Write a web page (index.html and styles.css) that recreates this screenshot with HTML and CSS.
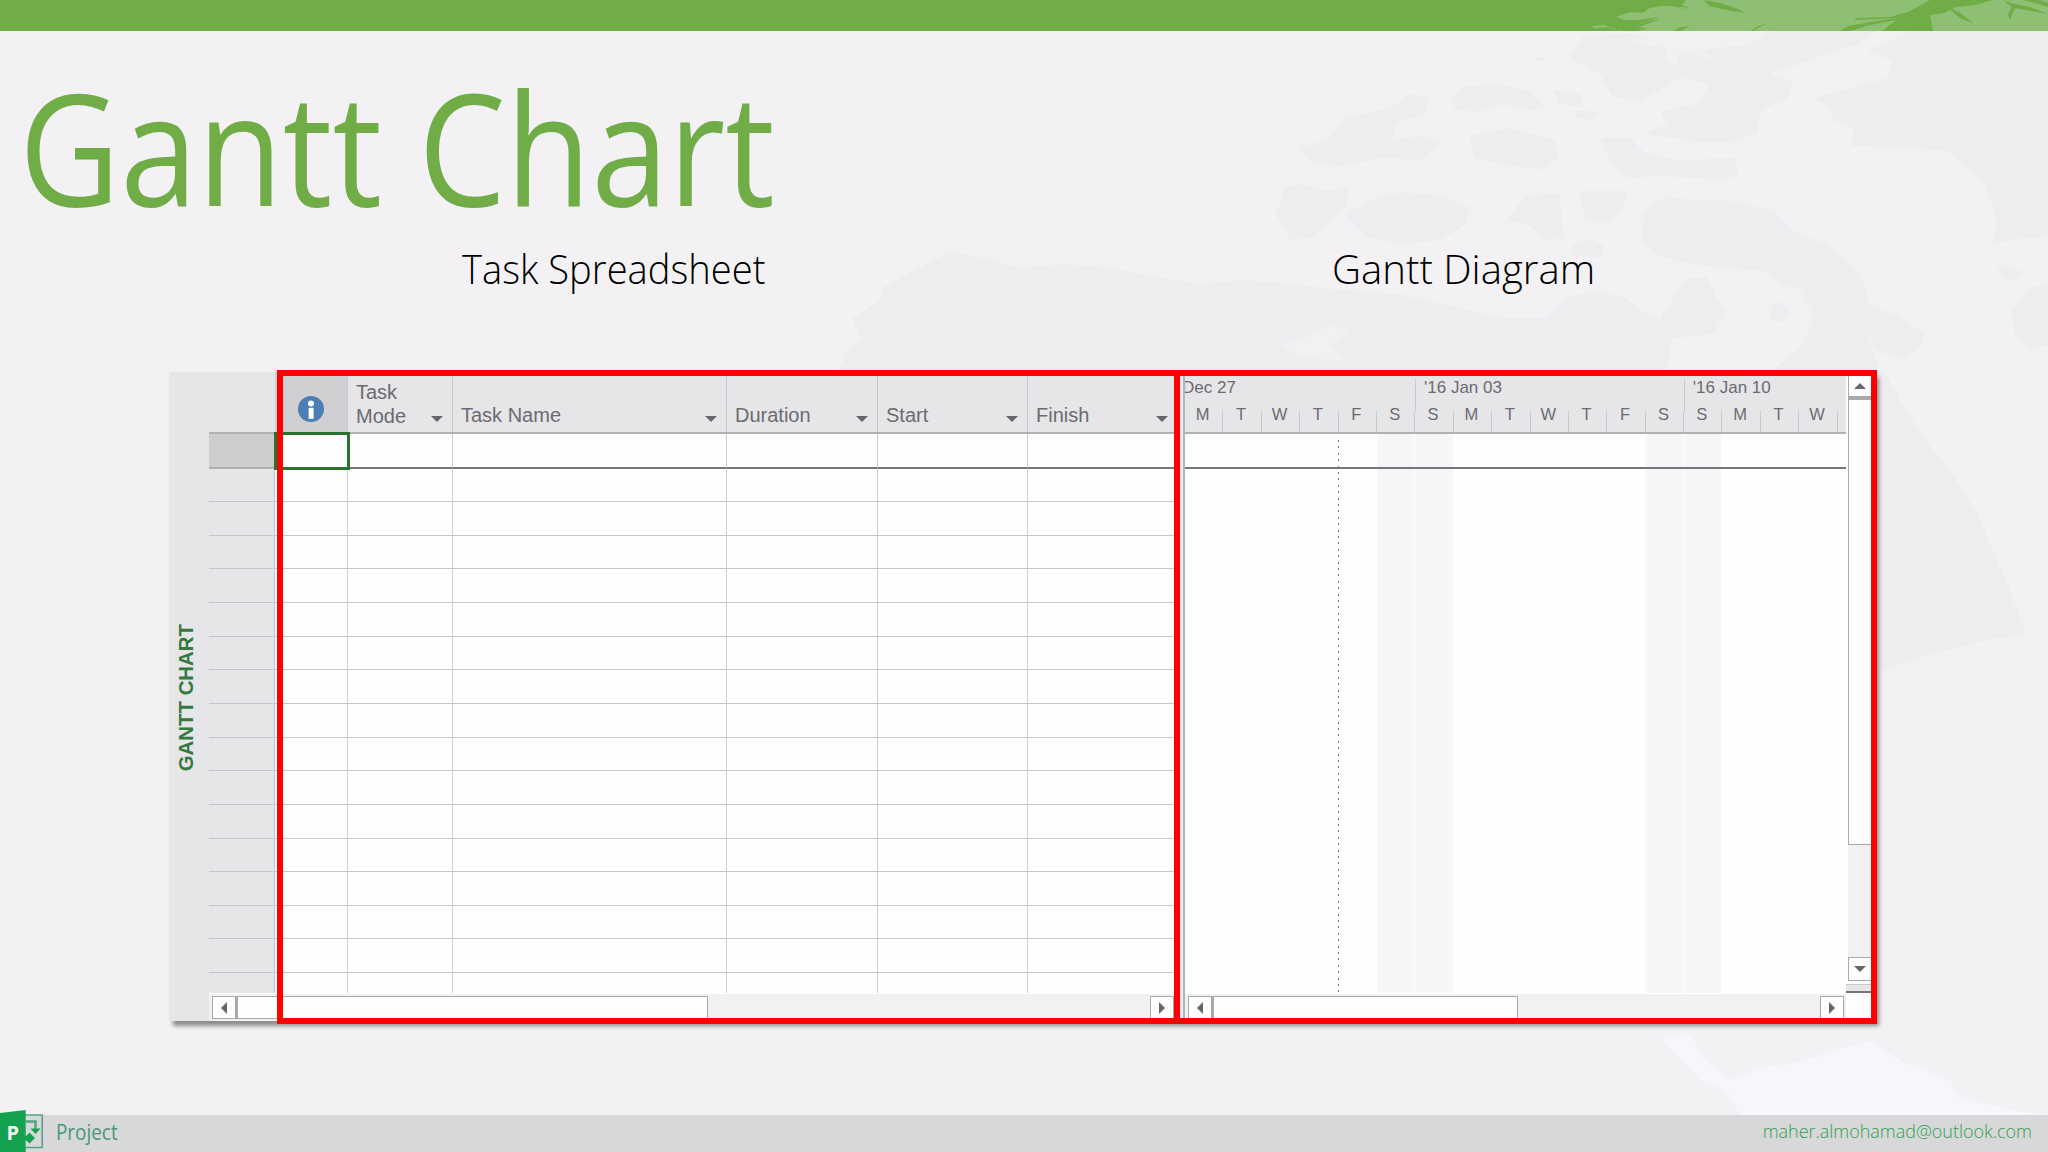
FILE: index.html
```html
<!DOCTYPE html>
<html lang="en">

<head>
    <meta charset="UTF-8">
    <meta name="viewport" content="width=device-width, initial-scale=1.0">
    <title>Gantt Chart</title>
    <link rel="stylesheet" href="styles.css">

    <script>
        document.addEventListener("DOMContentLoaded", () => {

            const columns = ["info", "mode", "name", "duration", "start", "finish"];
            let rows = document.getElementById("rows");

            for (let i = 0; i < 17; i++) {
                let row = document.createElement("div");
                row.className = i === 0 ? "row selected" : "row";

                let head = document.createElement("div");
                head.className = "row-head";
                row.appendChild(head);

                for (let column of columns) {
                    let cell = document.createElement("div");
                    cell.className = "cell " + column;
                    row.appendChild(cell);
                }

                rows.appendChild(row);
            }

            let days = document.getElementById("days");
            let columnsArea = document.getElementById("dayColumns");

            for (let letter of "MTWTFSSMTWTFSSMTW") {
                let day = document.createElement("div");
                day.className = "day";
                day.innerText = letter;
                days.appendChild(day);

                let column = document.createElement("div");
                column.className = letter === "S" ? "day-column weekend" : "day-column";
                columnsArea.appendChild(column);
            }

        }, false);
    </script>
</head>

<body>

    <svg class="map" viewBox="0 0 2048 1152">
        <g class="land">
            <path d="M838 370L850 347L862 340L852 318L880 300L884 287L915 270L950 252L985 258L1020 268L1064 264L1110 268L1150 276L1200 284L1245 280L1290 284L1340 290L1400 294L1440 304L1480 312L1500 318L1546 318L1566 298L1594 291L1626 298L1646 314L1660 320L1686 278L1706 277L1726 314L1713 334L1673 338L1666 372Z" />
            <path d="M1276 215L1284 188L1300 184L1325 190L1350 188L1345 207L1330 222L1310 238L1290 240Z" />
            <path d="M1345 215L1370 200L1400 192L1440 196L1470 208L1465 225L1440 240L1400 244L1366 236Z" />
            <path d="M1300 148L1330 138L1345 118L1390 108L1410 94L1430 98L1424 114L1398 122L1390 140L1420 136L1440 144L1420 160L1380 158L1340 166L1310 162Z" />
            <path d="M1450 98L1464 86L1500 84L1530 92L1544 106L1530 110L1504 104L1480 112L1456 110Z" />
            <path d="M1553 90L1580 94L1584 108L1560 104ZM1576 110L1598 112L1592 120L1576 118ZM1534 56L1546 58L1538 62Z" />
            <path d="M1470 136L1510 128L1554 140L1560 158L1540 170L1500 164L1474 158Z" />
            <path d="M1583 36L1570 58L1600 74L1613 98L1640 100L1663 88L1680 78L1710 84L1697 104L1660 111L1667 124L1643 134L1700 142L1733 141L1757 134L1760 111L1787 98L1793 81L1770 74L1807 61L1857 44L1877 31H1770L1750 44L1700 50L1660 42L1630 34Z" />
            <path d="M1600 138L1630 138L1646 154L1680 160L1735 158L1738 174L1726 180L1660 176L1630 178L1612 166Z" />
            <path d="M1580 191L1627 191L1622 212L1604 224L1584 216ZM1524 196L1560 194L1562 230L1566 238L1546 240L1530 226L1508 220Z" />
            <path d="M1573 246L1592 238L1604 246L1600 258L1572 254Z" />
            <path d="M1643 244L1640 221L1650 204L1667 196L1690 200L1733 201L1773 211L1793 231L1830 246L1860 274L1870 304L1900 318L1925 334L1918 350L1900 360L1876 350L1866 330L1880 372H1770L1800 348L1814 318L1800 290L1780 282L1760 270L1720 268L1680 262L1660 256Z" />
            <path d="M1768 306L1780 302L1790 312L1784 322L1770 320Z" />
            <path d="M1912 31L1867 51L1893 61L1887 78L1813 98L1830 108L1834 120L1853 128L1852 146L1946 150L1983 181L1997 218L1993 244L2010 240L2048 236V31Z" />
            <path d="M2000 264L2024 272L2014 282L1998 274ZM2048 284L2030 288L2012 310L2014 332L2030 350L2048 345Z" />
            <path d="M1876 372L1880 672L1905 662L1960 647L1985 640L2026 634L2010 590L1990 545L1978 515L1950 470L1925 440L1900 400L1885 372Z" />
        </g>
        <g class="water">
            <path d="M1626 36L1660 42L1750 35L1738 44L1700 50L1720 60L1680 52L1676 66L1664 60L1666 48L1640 44Z" />
            <path d="M1280 345L1310 335L1330 325L1350 332L1330 345L1345 360L1300 358Z" />
            <path d="M1500 318L1470 300L1450 304L1440 292L1480 288L1520 300L1540 314Z" />
        </g>
        <path class="shore" d="M1660 1038L1690 1034L1705 1060L1730 1080L1760 1068L1800 1062L1840 1048L1870 1042L1900 1060L1950 1080L1960 1098L2020 1112L2048 1115L1740 1115L1725 1090L1700 1080Z" />
    </svg>

    <header class="top-bar">
        <svg viewBox="0 0 548 31" preserveAspectRatio="none">
            <path class="light" d="M92 26L104 25L113 29L125 31H548V0H186L182 5L190 8L172 6L160 6L150 8L142 13L130 12L116 17L125 20L138 20L160 17L145 22L133 27L140 31L120 31L110 27L94 28Z" />
            <path class="dark" d="M133 27L148 21L161 19L150 23L139 27L148 29L132 31ZM165 4L180 8L191 10L178 7L170 0ZM204 0L220 3L236 8L245 13L226 10L209 6ZM173 31L180 27L190 26L180 31ZM251 31L258 26L268 23L258 28L254 31ZM340 31L348 26L370 22L398 18L354 20L356 18L390 17L408 12L430 0H493L475 5L456 7L444 13L430 15L433 31H382L396 20L370 25L350 31ZM445 5L462 14L474 24L460 18ZM503 0L514 4L530 7L548 14L526 10L515 8L510 20L508 14L512 7ZM524 0L548 7V3L540 0Z" />
        </svg>
    </header>

    <main>
        <h1>Gantt Chart</h1>

        <div class="captions">
            <h2 class="caption-table">Task Spreadsheet</h2>
            <h2 class="caption-diagram">Gantt Diagram</h2>
        </div>

        <section class="project">

            <div class="view-name"><span>GANTT CHART</span></div>

            <div class="sheet">
                <div class="sheet-head">
                    <div class="row-head"></div>
                    <div class="head info">
                        <svg viewBox="0 0 26 26">
                            <circle cx="13" cy="13" r="13" />
                            <rect x="10.6" y="11.8" width="5" height="11" />
                            <circle class="dot" cx="13" cy="7.6" r="3" />
                        </svg>
                    </div>
                    <div class="head mode"><span>Task<br>Mode</span><i class="arrow down"></i></div>
                    <div class="head name"><span>Task Name</span><i class="arrow down"></i></div>
                    <div class="head duration"><span>Duration</span><i class="arrow down"></i></div>
                    <div class="head start"><span>Start</span><i class="arrow down"></i></div>
                    <div class="head finish"><span>Finish</span><i class="arrow down"></i></div>
                </div>
                <div class="rows" id="rows"></div>
                <div class="hscroll">
                    <div class="button"><i class="arrow left"></i></div>
                    <div class="thumb"></div>
                    <div class="button end"><i class="arrow right"></i></div>
                </div>
                <div class="active-cell"></div>
            </div>

            <div class="splitter"></div>

            <div class="timeline">
                <div class="time-head">
                    <div class="weeks">
                        <div class="week first"><span>Dec 27</span></div>
                        <div class="week">'16 Jan 03</div>
                        <div class="week">'16 Jan 10</div>
                    </div>
                    <div class="days" id="days"></div>
                </div>
                <div class="day-columns" id="dayColumns">
                    <div class="row-line"></div>
                    <div class="today"></div>
                </div>
                <div class="hscroll">
                    <div class="button"><i class="arrow left"></i></div>
                    <div class="thumb"></div>
                    <div class="button end"><i class="arrow right"></i></div>
                </div>
            </div>

            <div class="vscroll">
                <div class="button"><i class="arrow up"></i></div>
                <div class="thumb"></div>
                <div class="track"></div>
                <div class="button bottom"><i class="arrow down"></i></div>
                <div class="grip"></div>
            </div>

            <div class="frame frame-table"></div>
            <div class="frame frame-diagram"></div>
        </section>
    </main>

    <footer>
        <svg class="logo" viewBox="0 0 44 42">
            <path class="page" d="M25 5H42.2V37.5H25" />
            <path class="page link" d="M26 11.5H35.5V19" />
            <path class="fill" d="M30.5 18.5H40.5L35.5 24ZM29.5 22.5L35 28L29.5 33.5L24 28Z" />
            <path class="fill" d="M0 3L25.7 0V42H0Z" />
            <text x="6.5" y="30">P</text>
        </svg>
        <span class="product">Project</span>
        <span class="email">maher.almohamad@outlook.com</span>
    </footer>

</body>

</html>
```
FILE: styles.css
```css
* {
    box-sizing: border-box;
}

body {
    margin: 0;
    width: 2048px;
    height: 1152px;
    overflow: hidden;
    display: flex;
    flex-direction: column;
    background-color: #f3f1f4;
    font-family: "Open Sans", "Noto Sans", sans-serif;
}

/* faint world map behind everything */
.map {
    position: absolute;
    left: 0;
    top: 0;
    width: 2048px;
    height: 1152px;
    z-index: -1;
}

.land {
    fill: #eeecef;
}

.water {
    fill: #f1f0f3;
}

.shore {
    fill: #f7f6fa;
}

.top-bar {
    height: 31px;
    background-color: #70ad47;
    display: flex;
    justify-content: flex-end;
}

.top-bar svg {
    width: 548px;
    height: 31px;
}

.top-bar .light {
    fill: #8fbf74;
}

.top-bar .dark {
    fill: #70ad47;
}

main {
    flex: 1;
}

h1 {
    margin: 25px 0 0 19px;
    width: max-content;
    font-size: 156px;
    font-weight: 400;
    line-height: 180px;
    color: #70ad47;
    transform-origin: left;
    transform: scaleX(0.892);
}

.captions {
    display: flex;
    margin-top: 2px;
    height: 60px;
}

h2 {
    margin: 0;
    font-size: 41px;
    font-weight: 300;
    line-height: 60px;
    color: #000;
    white-space: nowrap;
    transform-origin: left;
}

.caption-table {
    margin-left: 462px;
    width: 870px;
    transform: scaleX(0.93);
}

.caption-diagram {
    transform: scaleX(0.979);
}

/* project window */

.project {
    position: relative;
    display: flex;
    width: 1706px;
    height: 649px;
    margin: 74px 0 0 169px;
    background-color: #e6e5e8;
    box-shadow: 4px 5px 4px rgba(0, 0, 0, 0.42);
    font-family: "Liberation Sans", Arial, sans-serif;
    color: #6b6b70;
}

.view-name {
    width: 40px;
    display: flex;
    align-items: center;
    justify-content: center;
}

.view-name span {
    writing-mode: vertical-rl;
    transform: rotate(180deg);
    font-size: 20.4px;
    font-weight: bold;
    color: #34793f;
    margin: 3px 5px 0 0;
    white-space: nowrap;
}

.sheet {
    position: relative;
    width: 965px;
    display: flex;
    flex-direction: column;
}

.sheet-head {
    display: flex;
    height: 62px;
    border-bottom: 2px solid #b1b0b3;
}

.sheet-head .row-head {
    border-color: transparent;
}

.row-head {
    width: 66px;
    border-right: 1px solid #c4c3c7;
}

.info {
    width: 73px;
}

.mode {
    width: 105px;
}

.name {
    width: 274px;
}

.duration {
    width: 151px;
}

.start {
    width: 150px;
}

.finish {
    width: 146px;
}

.head {
    display: flex;
    align-items: flex-end;
    justify-content: space-between;
    border-right: 1px solid #c9c8cc;
    padding: 0 9px 5px 8px;
    font-size: 20px;
    line-height: 24px;
}

.head .arrow {
    margin-bottom: 5px;
}

.head.mode span {
    margin-bottom: -1px;
}

.head.finish,
.cell.finish {
    border-right: none;
}

.head.finish {
    padding-right: 6px;
}

.head.info {
    background-color: #d0cfd1;
    justify-content: center;
    padding: 0 0 10px;
}

.head.info svg {
    width: 26px;
    height: 26px;
    fill: #4a7eb5;
}

.head.info rect,
.head.info .dot {
    fill: #fff;
}

.rows {
    height: 559px;
    overflow: hidden;
}

.row {
    display: flex;
    height: 33.65px;
}

.row > div {
    border-bottom: 1px solid #c8c6ca;
}

.row.selected {
    height: 34.5px;
}

.row.selected > div {
    border-bottom: 2px solid #77757a;
}

.row.selected .row-head {
    background-color: #cdccce;
    border-bottom-color: #b1b0b3;
}

.cell {
    background-color: #fefefe;
    border-right: 1px solid #cfcdd1;
}

.active-cell {
    position: absolute;
    left: 65px;
    top: 60px;
    width: 76px;
    height: 38px;
    border: 3px solid #2a7230;
}

.arrow {
    width: 0;
    height: 0;
    border: 6px solid transparent;
}

.arrow.down {
    border-top-color: #67666a;
    border-bottom: none;
}

.arrow.up {
    border-bottom-color: #67666a;
    border-top: none;
}

.arrow.left {
    border-right-color: #67666a;
    border-left: none;
}

.arrow.right {
    border-left-color: #67666a;
    border-right: none;
}

.hscroll {
    height: 28px;
    display: flex;
    padding: 2px 2px 0 3px;
    background-color: #f2f1f2;
    border-top: 1px solid #fff;
}

.button {
    display: flex;
    align-items: center;
    justify-content: center;
    background-color: #fefefe;
    border: 1px solid #a9a8ab;
}

.hscroll .button,
.hscroll .thumb {
    height: 23px;
}

.hscroll .button {
    width: 24px;
}

.thumb {
    background-color: #fefefe;
    border: 1px solid #a9a8ab;
}

.hscroll .thumb {
    width: 472px;
    border-left-width: 2px;
}

.hscroll .end {
    margin-left: auto;
}

.sheet .hscroll {
    padding-right: 0;
}

.timeline .hscroll .thumb {
    width: 306px;
}

.splitter {
    width: 11px;
    background-color: #eceaed;
    border-right: 2px solid #b5b4b7;
}

/* timescale and day columns */

.timeline {
    width: 661px;
    display: flex;
    flex-direction: column;
}

.time-head {
    height: 62px;
    background-color: #e6e6e8;
    border-bottom: 2px solid #b1b0b3;
    overflow: hidden;
}

.weeks,
.days {
    display: flex;
}

.weeks {
    height: 39px;
    padding-top: 7px;
}

.week {
    width: 268.8px;
    flex: none;
    border-left: 1px solid #c9c8cc;
    padding-left: 8px;
    font-size: 17px;
    line-height: 17px;
}

.week.first {
    width: 230px;
    border-left: none;
    padding-left: 0;
    overflow: hidden;
}

.week.first span {
    margin-left: -3px;
}

.days {
    height: 21px;
    font-size: 16.5px;
    line-height: 7px;
}

.day {
    width: 38.4px;
    flex: none;
    border-right: 1px solid #c9c8cc;
    text-align: center;
    padding-right: 2px;
}

.day-columns {
    position: relative;
    display: flex;
    height: 559px;
    background-color: #fefefe;
}

.day-column {
    width: 38.4px;
}

.weekend {
    background-color: #f6f5f8;
    border-right: 1px solid #fefefe;
}

.row-line {
    position: absolute;
    left: 0;
    right: 0;
    top: 33px;
    height: 2px;
    background-color: #77757a;
}

.today {
    position: absolute;
    left: 153px;
    top: 6px;
    bottom: 0;
    width: 1px;
    background: repeating-linear-gradient(#77757a 0, #77757a 2px, transparent 2px, transparent 6.4px);
}

.vscroll {
    width: 29px;
    display: flex;
    flex-direction: column;
    padding-left: 2px;
    background-color: #fefefe;
}

.vscroll .button {
    height: 25px;
    width: 24px;
    padding-top: 3px;
}

.vscroll .thumb {
    height: 448px;
    border-top-width: 3px;
}

.vscroll .track {
    height: 112px;
    background-color: #f1f1f3;
}

.vscroll .bottom {
    height: 24px;
    padding-top: 0;
}

.vscroll .grip {
    height: 9px;
    margin: 3px 0 0 -2px;
    background-color: #e6e5e8;
    border-top: 1px solid #c9c8cc;
    border-bottom: 2px solid #77757a;
}

/* red highlight boxes */

.frame {
    position: absolute;
    top: -2px;
    height: 654px;
    border: 6px solid #f00;
}

.frame-table {
    left: 108px;
    width: 903px;
}

.frame-diagram {
    left: 1005px;
    width: 703px;
}

footer {
    height: 37px;
    display: flex;
    align-items: center;
    background-color: #d8d7d9;
}

.logo {
    width: 44px;
    height: 42px;
    margin-top: -5px;
}

.logo .fill {
    fill: #14a150;
}

.logo .page {
    fill: none;
    stroke: #4fa57c;
    stroke-width: 1.5;
}

.logo .link {
    stroke-width: 2.5;
}

.logo text {
    font-size: 20px;
    font-weight: bold;
    fill: #f2f1f4;
}

.product {
    margin-left: 12px;
    margin-top: -4px;
    font-size: 21px;
    color: #469878;
    transform-origin: left;
    transform: scaleX(0.9);
}

.email {
    margin: -5px 16px 0 auto;
    font-size: 19px;
    font-weight: 300;
    color: #2fa152;
    transform-origin: right;
    transform: scaleX(0.945);
}
```
